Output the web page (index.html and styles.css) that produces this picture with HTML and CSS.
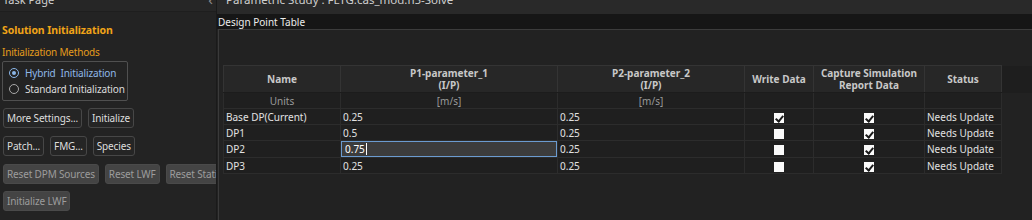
FILE: index.html
```html
<!DOCTYPE html>
<html>
<head>
<meta charset="utf-8">
<link rel="stylesheet" href="styles.css">
</head>
<body>
<div class="app">
  <aside class="task">
    <div class="task-head"><span class="task-title">Task Page</span><span class="chev">&lsaquo;</span></div>
    <div class="sec-title">Solution Initialization</div>
    <div class="sub-title">Initialization Methods</div>
    <div class="group">
      <div class="radio on"><span class="rdot"></span><span class="rlabel">Hybrid&nbsp; Initialization</span></div>
      <div class="radio"><span class="rdot"></span><span class="rlabel">Standard Initialization</span></div>
    </div>
    <div class="btn-row r1"><span class="btn">More Settings...</span><span class="btn">Initialize</span></div>
    <div class="btn-row r2"><span class="btn">Patch...</span><span class="btn">FMG...</span><span class="btn">Species</span></div>
    <div class="btn-row r3"><span class="btn dis">Reset DPM Sources</span><span class="btn dis">Reset LWF</span><span class="btn dis clip">Reset Statis</span></div>
    <div class="btn-row r4"><span class="btn dis">Initialize LWF</span></div>
  </aside>
  <div class="gap"></div>
  <main class="study">
    <div class="study-head"><span class="study-title">Parametric Study : FLTG.cas_mod.h5-Solve</span></div>
    <div class="tabbar"><span class="tab">Design Point Table</span></div>
    <div class="content">
      <table class="dp">
        <colgroup>
          <col class="c-name"><col class="c-p1"><col class="c-p2"><col class="c-wd"><col class="c-cap"><col class="c-st"><col class="c-fill">
        </colgroup>
        <thead>
          <tr class="hrow">
            <th>Name</th>
            <th><span class="hl">P1-parameter_1</span><span class="hl">(I/P)</span></th>
            <th><span class="hl">P2-parameter_2</span><span class="hl">(I/P)</span></th>
            <th>Write Data</th>
            <th><span class="hl">Capture Simulation</span><span class="hl">Report Data</span></th>
            <th>Status</th>
            <th class="fill"></th>
          </tr>
        </thead>
        <tbody>
          <tr class="urow"><td class="units">Units</td><td class="units">[m/s]</td><td class="units">[m/s]</td><td></td><td></td><td></td><td class="fill"></td></tr>
          <tr><td>Base DP(Current)</td><td>0.25</td><td>0.25</td><td class="ck"><span class="box on"></span></td><td class="ck"><span class="box on"></span></td><td>Needs Update</td><td class="fill"></td></tr>
          <tr><td>DP1</td><td>0.5</td><td>0.25</td><td class="ck"><span class="box"></span></td><td class="ck"><span class="box on"></span></td><td>Needs Update</td><td class="fill"></td></tr>
          <tr><td>DP2</td><td class="edit"><div class="editor">0.75<span class="caret"></span></div></td><td>0.25</td><td class="ck"><span class="box"></span></td><td class="ck"><span class="box on"></span></td><td>Needs Update</td><td class="fill"></td></tr>
          <tr><td>DP3</td><td>0.25</td><td>0.25</td><td class="ck"><span class="box"></span></td><td class="ck"><span class="box on"></span></td><td>Needs Update</td><td class="fill"></td></tr>
        </tbody>
      </table>
    </div>
  </main>
</div>
</body>
</html>
```
FILE: styles.css
```css
* { box-sizing: border-box; }
html, body { margin: 0; padding: 0; }
body {
  width: 1032px; height: 220px; overflow: hidden;
  background: #222222;
  font-family: "Noto Sans", "Open Sans", sans-serif;
  font-size: 10px;
  color: #dcdcdc;
}
.app { display: flex; height: 220px; }

/* left task page */
.task { width: 216px; flex: none; background: #232323; overflow: hidden; }
.task-head {
  height: 12px; background: #262626; border-bottom: 1px solid #1e1e1e;
  display: flex; justify-content: space-between; overflow: hidden;
}
.task-title { margin-top: -7px; padding-left: 3px; font-size: 11px; color: #d0d0d0; line-height: 14px; }
.chev { margin-top: -8px; margin-right: 3px; font-size: 15px; color: #8a8a8a; line-height: 14px; }
.sec-title { margin: 11px 0 0 2px; font-weight: bold; color: #f0a418; line-height: 14px; font-size: 10.5px; letter-spacing: -0.1px; }
.sub-title { margin: 8px 0 0 2px; color: #e49c1c; line-height: 14px; letter-spacing: -0.2px; }
.group {
  margin: 2px 0 0 2px; width: 126px; height: 40px;
  border: 1px solid #505050; border-radius: 2px;
  padding: 3px 0 0 6px;
}
.radio { display: flex; align-items: center; height: 16px; gap: 6px; white-space: nowrap; }
.rlabel { letter-spacing: -0.15px; }
.rdot { width: 10px; height: 10px; border-radius: 50%; border: 1px solid #a8a8a8; position: relative; flex: none; }
.radio.on .rdot { border-color: #8bb6e8; }
.radio.on .rdot::after {
  content: ""; position: absolute; left: 2px; top: 2px; width: 4px; height: 4px; border-radius: 50%; background: #8bb6e8;
}
.radio.on .rlabel { color: #8fb8e8; }
.btn-row { display: flex; gap: 6px; margin: 8px 0 0 3px; white-space: nowrap; }
.btn-row.r1 { margin-top: 7px; }
.btn-row.r4 { margin-top: 7px; }
.btn {
  height: 20px; line-height: 18px; padding: 0 3px;
  border: 1px solid #474747; border-radius: 3px; background: #252525; color: #dedede; flex: none;
  letter-spacing: -0.15px;
}
.btn.dis { background: #444444; border-color: #4a4a4a; color: #9c9c9c; }
.btn.clip { flex: 1; min-width: 0; overflow: hidden; border-top-right-radius: 0; border-bottom-right-radius: 0; border-right: none; }

.gap { width: 1px; flex: none; background: #1a1a1a; }

/* right study */
.study { flex: 1; display: flex; flex-direction: column; min-width: 0; }
.study-head { height: 14px; background: #292929; overflow: hidden; padding-left: 9px; }
.study-title { display: block; margin-top: -7px; font-size: 11.5px; line-height: 14px; color: #cfcfcf; }
.tabbar { height: 15px; background: #161616; padding-left: 1px; }
.tab { display: block; line-height: 15px; padding-top: 1px; color: #ececec; }
.content {
  flex: 1; margin-left: 1px; border-left: 1px solid #3a3a3a; border-top: 1px solid #3c3c3c;
  background: #222222; padding: 35px 0 0 4px;
}
.dp { border-collapse: collapse; table-layout: fixed; width: 809px; }
.c-name { width: 117px; } .c-p1 { width: 217px; } .c-p2 { width: 187px; }
.c-wd { width: 69px; } .c-cap { width: 111px; } .c-st { width: 77px; } .c-fill { width: 31px; }
.dp th {
  height: 27px; background: #272727; border: 1px solid #343434; border-bottom-color: #1c1c1c;
  font-weight: bold; color: #c8c8c8; line-height: 12px; padding: 0; text-align: center;
}
.hl { display: block; }
.dp th.fill { background: #1e1e1e; border: none; }
.dp td {
  height: 16px; padding: 0 0 0 2px; border: 1px solid #2c2c2c; background: #1f1f1f;
  white-space: nowrap; line-height: 14px; color: #e2e2e2; overflow: hidden;
}
.dp td.fill { background: #222222; border: none; }
.dp td.units { text-align: center; color: #9a9a9a; padding: 0; }
.dp td.ck { text-align: center; padding: 0; }
.box { display: inline-block; width: 10px; height: 10px; background: #fafafa; vertical-align: middle; position: relative; }
.box.on::after {
  content: ""; position: absolute; left: 3px; top: 1px; width: 3px; height: 6px;
  border: solid #1a1a1a; border-width: 0 2px 2px 0; transform: rotate(40deg);
}
.dp td.edit { padding: 0; }
.editor {
  height: 16px; border: 1px solid #6b9bd0; background: #3c3c3c; color: #ffffff;
  padding-left: 3px; line-height: 14px; display: flex; align-items: center;
}
.caret { display: inline-block; width: 1px; height: 12px; background: #ffffff; margin-left: 1px; }
```
